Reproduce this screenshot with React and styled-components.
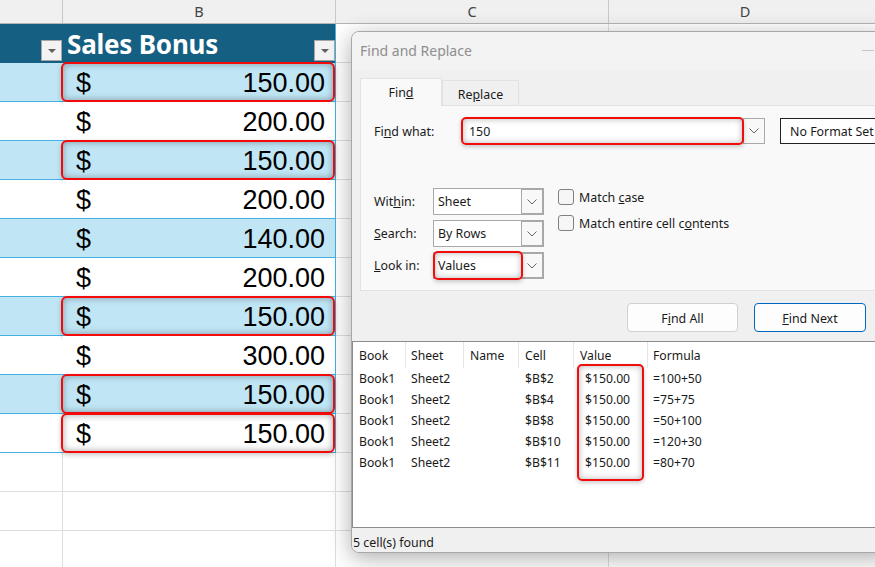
import styled, { createGlobalStyle } from "styled-components";

const GlobalStyle = createGlobalStyle`
  html, body {
    margin: 0;
    padding: 0;
    width: 875px;
    height: 567px;
    overflow: hidden;
    background: #fff;
  }
  * { box-sizing: border-box; }
`;

const Page = styled.div`
  position: relative;
  width: 875px;
  height: 567px;
  overflow: hidden;
`;

const ColumnBar = styled.div`
  display: grid;
  grid-template-columns: 63px 273px 273px 273px;
  height: 24px;
  background: #f0f0f0;
  border-bottom: 1px solid #b5b5b5;
`;

const ColumnLetter = styled.div`
  display: flex;
  align-items: center;
  justify-content: center;
  border-right: 1px solid #c8c8c8;
  font: 14.5px "Noto Sans", sans-serif;
  color: #444;
  padding-bottom: 1px;
`;

const SheetRow = styled.div`
  display: grid;
  grid-template-columns: 63px 273px 273px 273px;
  height: 39px;
`;

const BlankCell = styled.div`
  border-right: 1px solid #dedede;
  border-bottom: 1px solid #dedede;
`;

const HeaderCell = styled.div`
  display: flex;
  align-items: flex-end;
  justify-content: ${(p) => (p.$wide ? "space-between" : "flex-end")};
  background: #156082;
  border-right: 1px solid ${(p) => (p.$wide ? "#45b0e1" : "#156082")};
  padding: 0 0 2px ${(p) => (p.$wide ? 4 : 0)}px;
`;

const HeaderTitle = styled.span`
  align-self: center;
  padding-top: 2px;
  font: 700 26px "Noto Sans", sans-serif;
  color: #fff;
  letter-spacing: -0.2px;
  line-height: 1;
`;

const FilterButton = styled.span`
  display: flex;
  align-items: center;
  justify-content: center;
  width: 21px;
  height: 21px;
  background: #f3f3f3;
  border: 1px solid #a6a6a6;
  &::after {
    content: "";
    border-left: 4px solid transparent;
    border-right: 4px solid transparent;
    border-top: 4px solid #606060;
  }
`;

const BandCell = styled.div`
  background: ${(p) => (p.$band ? "#c0e6f5" : "#fff")};
  border-bottom: 1px solid #45b0e1;
`;

const AmountCell = styled(BandCell)`
  position: relative;
  display: flex;
  align-items: center;
  justify-content: space-between;
  padding: 3px 10px 0 13px;
  border-right: 1px solid #45b0e1;
  font: 27px "Liberation Sans", Arial, sans-serif;
  color: #000;
`;

const RedMark = styled.span`
  position: absolute;
  inset: -1px 0 -1px -2px;
  border: 2px solid #f50a0a;
  border-radius: 6px;
  box-shadow: inset 0 0 7px rgba(40, 40, 40, 0.42), 0 2px 5px rgba(0, 0, 0, 0.22);
  pointer-events: none;
`;

const Dialog = styled.div`
  position: absolute;
  left: 351px;
  top: 31px;
  width: 540px;
  height: 522px;
  display: flex;
  flex-direction: column;
  background: #f0f0f0;
  border: 1px solid #a8a8a8;
  border-radius: 8px;
  box-shadow: 0 5px 22px rgba(0, 0, 0, 0.32);
  font: 12.4px "Noto Sans", sans-serif;
  color: #1a1a1a;
  overflow: hidden;
`;

const TitleBar = styled.div`
  display: flex;
  align-items: center;
  justify-content: space-between;
  height: 38px;
  flex: none;
  padding: 0 16px 2px 8px;
  background: #f3f3f3;
  font-size: 14px;
  color: #8e8e8e;
`;

const MinimizeLine = styled.span`
  width: 12px;
  height: 1px;
  background: #c4c4c4;
`;

const TabRow = styled.div`
  display: flex;
  align-items: flex-end;
  height: 36px;
  flex: none;
  margin-left: 8px;
  margin-bottom: -1px;
`;

const Tab = styled.div`
  display: flex;
  align-items: center;
  justify-content: center;
  width: ${(p) => p.$width}px;
  height: ${(p) => (p.$active ? 28 : 26)}px;
  padding-top: ${(p) => (p.$active ? 0 : 2)}px;
  background: ${(p) => (p.$active ? "#f9f9f9" : "#f0f0f0")};
  border: 1px solid #e2e2e2;
  border-bottom: ${(p) => (p.$active ? "none" : "1px solid #e2e2e2")};
  position: relative;
  z-index: 1;
`;

const Panel = styled.div`
  flex: none;
  margin-left: 8px;
  height: 186px;
  padding: 11px 0 0 13px;
  background: #f9f9f9;
  border: 1px solid #e2e2e2;
`;

const FindRow = styled.div`
  display: flex;
  align-items: center;
  height: 28px;
`;

const FieldLabel = styled.span`
  flex: none;
  width: ${(p) => p.$width}px;
`;

const InputBox = styled.div`
  position: relative;
  display: flex;
  align-items: center;
  flex: none;
  width: 281px;
  height: 26px;
  padding-left: 7px;
  background: #fff;
`;

const RedOutline = styled.span`
  position: absolute;
  inset: ${(p) => p.$inset};
  border: 2px solid #f20d0d;
  border-radius: 5px;
  box-shadow: inset 0 0 6px rgba(40, 40, 40, 0.35), 0 2px 4px rgba(0, 0, 0, 0.2);
  pointer-events: none;
`;

const ValueOutline = styled(RedOutline)`
  width: 67px;
  height: 117px;
`;

const ChevronButton = styled.span`
  display: flex;
  align-items: center;
  justify-content: center;
  flex: none;
  width: ${(p) => p.$width || 22}px;
  height: ${(p) => p.$height || 26}px;
  background: #f8f8f8;
  border: 1px solid #a9a9a9;
`;

const FormatBox = styled.div`
  display: flex;
  align-items: center;
  flex: none;
  width: 120px;
  height: 26px;
  margin-left: 15px;
  padding-left: 9px;
  border: 1px solid #222;
  background: #fff;
  white-space: nowrap;
`;

const OptionsArea = styled.div`
  display: flex;
  margin-top: 43px;
`;

const SelectColumn = styled.div`
  display: flex;
  flex-direction: column;
  gap: 5px;
`;

const SelectRow = styled.div`
  display: flex;
  align-items: center;
`;

const SelectBox = styled.div`
  position: relative;
  display: flex;
  align-items: center;
  justify-content: space-between;
  width: 111px;
  height: 27px;
  padding-left: 4px;
  background: #fff;
  border: 1px solid #a9a9a9;
`;

const CheckColumn = styled.div`
  display: flex;
  flex-direction: column;
  gap: 10px;
  margin: 1px 0 0 14px;
`;

const CheckRow = styled.label`
  display: flex;
  align-items: center;
  gap: 5px;
  height: 16px;
`;

const CheckBox = styled.span`
  width: 16px;
  height: 16px;
  border: 1px solid #808080;
  border-radius: 3px;
  background: #f6f6f6;
`;

const ButtonRow = styled.div`
  display: flex;
  justify-content: flex-end;
  gap: 16px;
  flex: none;
  margin: 12px 24px 9px 0;
`;

const DialogButton = styled.button`
  width: ${(p) => (p.$primary ? 112 : 111)}px;
  height: 29px;
  padding: 2px 0 0;
  font: inherit;
  color: inherit;
  background: #fdfdfd;
  border: 1px solid ${(p) => (p.$primary ? "#0067c0" : "#d0d0d0")};
  border-radius: 4px;
`;

const Results = styled.div`
  position: relative;
  flex: none;
  height: 187px;
  display: grid;
  grid-template-columns: 53px 58px 55px 55px 74px 1fr;
  grid-template-rows: 26px repeat(5, 21px);
  align-content: start;
  background: #fff;
  border-top: 1px solid #8c8c8c;
  border-bottom: 1px solid #8c8c8c;
  border-left: 1px solid #8c8c8c;
  font-size: 12.2px;
`;

const ResultHead = styled.div`
  display: flex;
  align-items: center;
  padding-left: ${(p) => p.$pad || 6}px;
  border-right: ${(p) => (p.$last ? "none" : "1px solid #e6e6e6")};
`;

const ResultCell = styled.div`
  display: flex;
  align-items: center;
  padding-left: ${(p) => p.$pad || 6}px;
  white-space: nowrap;
`;

const StatusBar = styled.div`
  flex: 1;
  display: flex;
  align-items: center;
  padding: 5px 0 0 1px;
  background: #f0f0f0;
`;

const Chevron = () => (
  <svg width="10" height="6" viewBox="0 0 10 6" fill="none">
    <path d="M0.5 0.5 L5 5 L9.5 0.5" stroke="#666" strokeWidth="1" />
  </svg>
);

const amounts = [
  { value: "150.00", mark: true },
  { value: "200.00" },
  { value: "150.00", mark: true },
  { value: "200.00" },
  { value: "140.00" },
  { value: "200.00" },
  { value: "150.00", mark: true },
  { value: "300.00" },
  { value: "150.00", mark: true },
  { value: "150.00", mark: true },
];

const found = [
  ["$B$2", "=100+50"],
  ["$B$4", "=75+75"],
  ["$B$8", "=50+100"],
  ["$B$10", "=120+30"],
  ["$B$11", "=80+70"],
];

export default function App() {
  return (
    <Page>
      <GlobalStyle />
      <ColumnBar>
        <ColumnLetter />
        <ColumnLetter>B</ColumnLetter>
        <ColumnLetter>C</ColumnLetter>
        <ColumnLetter>D</ColumnLetter>
      </ColumnBar>

      <SheetRow>
        <HeaderCell>
          <FilterButton />
        </HeaderCell>
        <HeaderCell $wide>
          <HeaderTitle>Sales Bonus</HeaderTitle>
          <FilterButton />
        </HeaderCell>
        <BlankCell />
        <BlankCell />
      </SheetRow>

      {amounts.map((row, i) => (
        <SheetRow key={i}>
          <BandCell $band={i % 2 === 0} />
          <AmountCell $band={i % 2 === 0}>
            <span>$</span>
            <span>{row.value}</span>
            {row.mark && <RedMark />}
          </AmountCell>
          <BlankCell />
          <BlankCell />
        </SheetRow>
      ))}

      {[0, 1, 2].map((i) => (
        <SheetRow key={i}>
          <BlankCell />
          <BlankCell />
          <BlankCell />
          <BlankCell />
        </SheetRow>
      ))}

      <Dialog>
        <TitleBar>
          <span>Find and Replace</span>
          <MinimizeLine />
        </TitleBar>

        <TabRow>
          <Tab $active $width={82}>
            <span>
              Fin<u>d</u>
            </span>
          </Tab>
          <Tab $width={77}>
            <span>
              Re<u>p</u>lace
            </span>
          </Tab>
        </TabRow>

        <Panel>
          <FindRow>
            <FieldLabel $width={88}>
              Fi<u>n</u>d what:
            </FieldLabel>
            <InputBox>
              150
              <RedOutline $inset="-1px -1px -1px -1px" />
            </InputBox>
            <ChevronButton>
              <Chevron />
            </ChevronButton>
            <FormatBox>No Format Set</FormatBox>
          </FindRow>

          <OptionsArea>
            <SelectColumn>
              <SelectRow>
                <FieldLabel $width={59}>
                  Wit<u>h</u>in:
                </FieldLabel>
                <SelectBox>
                  Sheet
                  <ChevronButton $height={25}>
                    <Chevron />
                  </ChevronButton>
                </SelectBox>
              </SelectRow>
              <SelectRow>
                <FieldLabel $width={59}>
                  <u>S</u>earch:
                </FieldLabel>
                <SelectBox>
                  By Rows
                  <ChevronButton $height={25}>
                    <Chevron />
                  </ChevronButton>
                </SelectBox>
              </SelectRow>
              <SelectRow>
                <FieldLabel $width={59}>
                  <u>L</u>ook in:
                </FieldLabel>
                <SelectBox>
                  Values
                  <ChevronButton $height={25}>
                    <Chevron />
                  </ChevronButton>
                  <RedOutline $inset="-2px 20px -2px -1px" />
                </SelectBox>
              </SelectRow>
            </SelectColumn>

            <CheckColumn>
              <CheckRow>
                <CheckBox />
                <span>
                  Match <u>c</u>ase
                </span>
              </CheckRow>
              <CheckRow>
                <CheckBox />
                <span>
                  Match entire cell c<u>o</u>ntents
                </span>
              </CheckRow>
            </CheckColumn>
          </OptionsArea>
        </Panel>

        <ButtonRow>
          <DialogButton>
            F<u>i</u>nd All
          </DialogButton>
          <DialogButton $primary>
            <u>F</u>ind Next
          </DialogButton>
        </ButtonRow>

        <Results>
          <ResultHead>Book</ResultHead>
          <ResultHead $pad={5}>Sheet</ResultHead>
          <ResultHead>Name</ResultHead>
          <ResultHead>Cell</ResultHead>
          <ResultHead>Value</ResultHead>
          <ResultHead $pad={5} $last>
            Formula
          </ResultHead>
          {found.map(([cell, formula]) => [
            <ResultCell key={cell + "b"}>Book1</ResultCell>,
            <ResultCell key={cell + "s"} $pad={5}>
              Sheet2
            </ResultCell>,
            <ResultCell key={cell + "n"} />,
            <ResultCell key={cell + "c"}>{cell}</ResultCell>,
            <ResultCell key={cell + "v"} $pad={11}>
              $150.00
            </ResultCell>,
            <ResultCell key={cell + "f"} $pad={5}>
              {formula}
            </ResultCell>,
          ])}
          <ValueOutline $inset="22px auto auto 224px" />
        </Results>

        <StatusBar>5 cell(s) found</StatusBar>
      </Dialog>
    </Page>
  );
}
